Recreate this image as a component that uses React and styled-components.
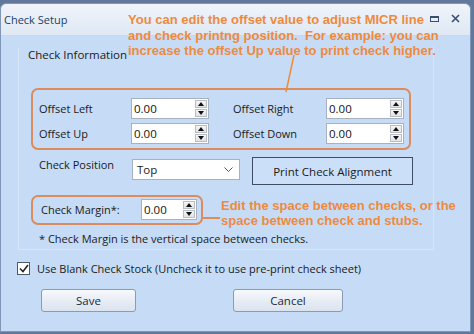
import React from 'react';
import styled, { createGlobalStyle } from 'styled-components';

const GlobalStyle = createGlobalStyle`
  html, body {
    margin: 0;
    padding: 0;
    background: #62789a;
    font-family: "Open Sans", "Noto Sans", sans-serif;
  }
`;

const ORANGE = '#ee8a3e';
const BOX = '#dc8b5c';

const Window = styled.div`
  position: relative;
  width: 469px;
  height: 327px;
  margin-top: 3px;
  border: 1px solid #8096b6;
  border-radius: 6px 6px 0 0;
  background: #c6dcf6;
  display: flex;
  flex-direction: column;
`;

const TitleBar = styled.div`
  height: 31px;
  display: flex;
  align-items: center;
  padding: 0 0 0 3px;
  border-radius: 6px 6px 0 0;
  background: linear-gradient(#f0f4fa, #dfe8f4);
  border-bottom: 1px solid #c9d8ea;
  color: #223f66;
  font-size: 11px;
`;

const Title = styled.span`
  flex: 1;
`;

const TitleButtons = styled.div`
  display: flex;
  align-items: center;
  gap: 12px;
  margin-right: 10px;
  margin-top: -2px;
`;

const Body = styled.div`
  flex: 1;
  padding: 11px 0 0 17px;
  display: flex;
  flex-direction: column;
  color: #1a1a1a;
  font-size: 11px;
`;

const Group = styled.div`
  width: 402px;
  border: 1px solid #d6e5f7;
  border-top: none;
  padding: 0 0 2px 12px;
  display: flex;
  flex-direction: column;
`;

const GroupTitle = styled.div`
  margin-left: -3px;
  font-size: 11.5px;
  height: 16px;
  line-height: 16px;
  margin-bottom: 25px;
`;

const OrangeBox = styled.div`
  flex-shrink: 0;
  border: 2px solid ${BOX};
  border-radius: 7px;
  box-sizing: border-box;
  width: ${p => p.$w}px;
  padding: ${p => p.$pad};
`;

const OffsetGrid = styled.div`
  display: grid;
  grid-template-columns: 92px 78px 24px 93px 78px;
  row-gap: 4px;
  align-items: center;
`;

const Label = styled.span`
  white-space: nowrap;
  width: ${p => (p.$w ? `${p.$w}px` : 'auto')};
  flex-shrink: 0;
`;

const SpinBox = styled.div`
  box-sizing: border-box;
  flex-shrink: 0;
  width: ${p => p.$w}px;
  height: 21px;
  background: #fff;
  border: 1px solid #a7b1bf;
  display: flex;
  align-items: center;
  padding-left: 2px;
  font-size: 11.5px;
  color: #111;
`;

const SpinValue = styled.span`
  flex: 1;
`;

const SpinButtons = styled.div`
  display: flex;
  flex-direction: column;
  gap: 1px;
  margin-right: 1px;
`;

const SpinButton = styled.div`
  width: 12px;
  height: 8px;
  box-sizing: border-box;
  border: 1px solid #b9bec6;
  background: linear-gradient(#f6f6f6, #e2e2e2);
  display: flex;
  align-items: center;
  justify-content: center;
`;

const PositionRow = styled.div`
  display: flex;
  align-items: flex-start;
  margin-top: 7px;
  padding-left: 8px;
`;

const Select = styled.div`
  box-sizing: border-box;
  width: 108px;
  height: 21px;
  margin-top: 2px;
  background: #fff;
  border: 1px solid #a7b1bf;
  display: flex;
  align-items: center;
  justify-content: space-between;
  padding: 0 6px 0 4px;
  font-size: 11.5px;
`;

const AlignButton = styled.div`
  box-sizing: border-box;
  width: 161px;
  height: 28px;
  margin-left: 12px;
  border: 1px solid #3e4d63;
  background: #cbe0f8;
  display: flex;
  align-items: center;
  justify-content: center;
  font-size: 11.5px;
`;

const MarginRow = styled.div`
  display: flex;
  align-items: flex-start;
  margin-top: 10px;
`;

const MarginInner = styled.div`
  display: flex;
  align-items: center;
`;

const Connector = styled.div`
  flex-shrink: 0;
  width: 17px;
  height: 2px;
  background: ${BOX};
  margin-top: 22px;
`;

const Note = styled.div`
  margin: 3px 0 0 8px;
  height: 16px;
  line-height: 16px;
  white-space: nowrap;
`;

const CheckRow = styled.div`
  display: flex;
  align-items: center;
  gap: 7px;
  margin: 11px 0 0 -1px;
  white-space: nowrap;
`;

const CheckBox = styled.div`
  box-sizing: border-box;
  width: 13px;
  height: 13px;
  border: 1px solid #4e5a6a;
  background: #fff;
  display: flex;
  align-items: center;
  justify-content: center;
`;

const ButtonRow = styled.div`
  display: flex;
  margin: 13px 0 0 23px;
  gap: 97px;
`;

const Button = styled.div`
  box-sizing: border-box;
  width: ${p => p.$w}px;
  height: 23px;
  border: 1px solid #8a9bb2;
  border-radius: 3px;
  background: linear-gradient(#f7f9fc, #e7edf5 50%, #dbe3ee);
  display: flex;
  align-items: center;
  justify-content: center;
  font-size: 11.5px;
  color: #1a2a3e;
`;

const Callout = styled.div`
  font-family: "Liberation Sans", Arial, sans-serif;
  font-weight: bold;
  font-size: 13px;
  line-height: 15px;
  color: ${ORANGE};
  white-space: pre;
`;

const TopCallout = styled(Callout)`
  position: absolute;
  left: 127px;
  top: 8px;
  line-height: 15.5px;
`;

const LeaderLine = styled.svg`
  position: absolute;
  left: 280px;
  top: 50px;
`;

const MarginCallout = styled(Callout)`
  flex-shrink: 0;
  margin-top: 3px;
  margin-left: 1px;
`;

const Arrow = ({ up }) => (
  <svg width="6" height="4" viewBox="0 0 6 4">
    <path d={up ? 'M0 4 L3 0 L6 4 Z' : 'M0 0 L3 4 L6 0 Z'} fill="#111" />
  </svg>
);

const Spin = ({ w = 78, value = '0.00' }) => (
  <SpinBox $w={w}>
    <SpinValue>{value}</SpinValue>
    <SpinButtons>
      <SpinButton><Arrow up /></SpinButton>
      <SpinButton><Arrow /></SpinButton>
    </SpinButtons>
  </SpinBox>
);

export default function App() {
  return (
    <>
      <GlobalStyle />
      <Window>
        <TitleBar>
          <Title>Check Setup</Title>
          <TitleButtons>
            <svg width="9" height="6" viewBox="0 0 9 6">
              <rect x="0.5" y="0.5" width="8" height="5" fill="none" stroke="#3a4f6e" />
              <rect x="0" y="0" width="9" height="2" fill="#3a4f6e" />
            </svg>
            <svg width="9" height="9" viewBox="0 0 9 9">
              <path d="M1 1 L8 8 M8 1 L1 8" stroke="#3a4f6e" strokeWidth="1.6" />
            </svg>
          </TitleButtons>
        </TitleBar>
        <Body>
          <Group>
            <GroupTitle>Check Information</GroupTitle>
            <OrangeBox $w={380} $pad="8px 0 4px 6px">
              <OffsetGrid>
                <Label>Offset Left</Label>
                <Spin />
                <span />
                <Label>Offset Right</Label>
                <Spin />
                <Label>Offset Up</Label>
                <Spin />
                <span />
                <Label>Offset Down</Label>
                <Spin />
              </OffsetGrid>
            </OrangeBox>
            <PositionRow>
              <Label $w={93}>Check Position</Label>
              <Select>
                <span>Top</span>
                <svg width="9" height="6" viewBox="0 0 9 6">
                  <path d="M0.5 0.5 L4.5 4.5 L8.5 0.5" fill="none" stroke="#555" strokeWidth="1" />
                </svg>
              </Select>
              <AlignButton>Print Check Alignment</AlignButton>
            </PositionRow>
            <MarginRow>
              <OrangeBox $w={172} $pad="2px 0 3px 8px">
                <MarginInner>
                  <Label $w={100}>Check Margin*:</Label>
                  <Spin w={56} />
                </MarginInner>
              </OrangeBox>
              <Connector />
              <MarginCallout>
                Edit the space between checks, or the
                <br />
                space between check and stubs.
              </MarginCallout>
            </MarginRow>
            <Note>* Check Margin is the vertical space between checks.</Note>
          </Group>
          <CheckRow>
            <CheckBox>
              <svg width="10" height="9" viewBox="0 0 10 9">
                <path d="M1 4.5 L4 7.5 L9 1" fill="none" stroke="#222" strokeWidth="1.5" />
              </svg>
            </CheckBox>
            <span>Use Blank Check Stock (Uncheck it to use pre-print check sheet)</span>
          </CheckRow>
          <ButtonRow>
            <Button $w={95}>Save</Button>
            <Button $w={110}>Cancel</Button>
          </ButtonRow>
        </Body>
        <TopCallout>
          You can edit the offset value to adjust MICR line
          <br />
          {'and check printng position.  For example: you can'}
          <br />
          increase the offset Up value to print check higher.
        </TopCallout>
        <LeaderLine width="20" height="40" viewBox="0 0 20 40">
          <path d="M13 1 L5 38" stroke={ORANGE} strokeWidth="1.5" />
        </LeaderLine>
      </Window>
    </>
  );
}
